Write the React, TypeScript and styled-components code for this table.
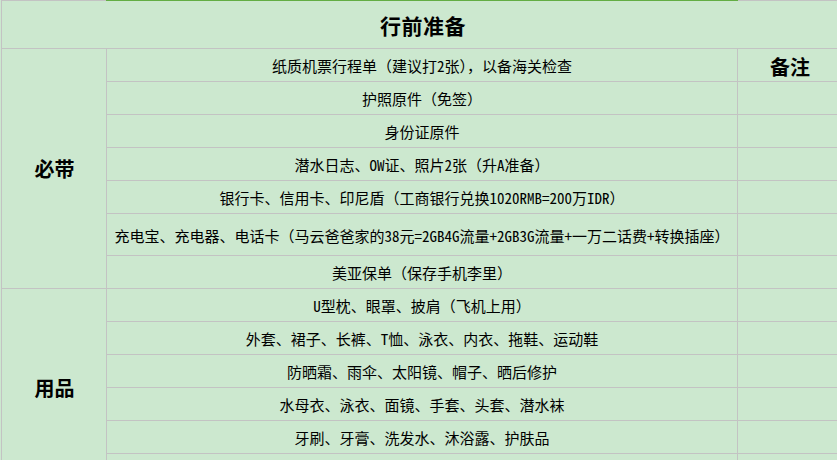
import React from 'react';
import styled, { createGlobalStyle } from 'styled-components';

const GlobalStyle = createGlobalStyle`
    html, body {
        margin: 0;
        padding: 0;
        background: #cce8cf;
        overflow: hidden;
    }
`;

const Page = styled.div`
    width: 842px;
    padding-left: 1px;
    background: #cce8cf;
    font-family: "Noto Sans Mono CJK SC", "Noto Sans CJK SC", sans-serif;
    color: #000;
`;

const Sheet = styled.div`
    position: relative;
    display: grid;
    grid-template-columns: 104px 630px 104px;
    gap: 1px;
    padding: 1px 0 0 1px;
    background: #c3c3c3;
`;

const Highlight = styled.div`
    position: absolute;
    top: 0;
    left: 105px;
    width: 632px;
    height: 1px;
    background: #63ad44;
`;

const Cell = styled.div`
    display: flex;
    align-items: center;
    justify-content: center;
    background: #cce8cf;
    white-space: nowrap;
`;

const Title = styled(Cell)`
    grid-column: 1 / -1;
    height: 47px;
    padding-left: 2px;
    font-size: 21px;
    font-weight: 700;
    letter-spacing: 0.5px;
`;

const Category = styled(Cell)<{ $rows: number }>`
    grid-column: 1;
    grid-row: span ${p => p.$rows};
    font-size: 20px;
    font-weight: 700;
    padding-left: 1px;
`;

const Item = styled(Cell)<{ $tall?: boolean }>`
    grid-column: 2;
    height: ${p => (p.$tall ? '41px' : '32px')};
    font-size: 15px;
    padding-top: 1px;
    box-sizing: border-box;
`;

const Note = styled(Cell)`
    grid-column: 3;
    font-size: 20px;
    font-weight: 700;
    padding-top: 3px;
`;

interface ISection {
    name: string;
    items: string[];
    tall?: number;
}

const sections: ISection[] = [
    {
        name: '必带',
        items: [
            '纸质机票行程单（建议打2张），以备海关检查',
            '护照原件（免签）',
            '身份证原件',
            '潜水日志、OW证、照片2张（升A准备）',
            '银行卡、信用卡、印尼盾（工商银行兑换1020RMB=200万IDR）',
            '充电宝、充电器、电话卡（马云爸爸家的38元=2GB4G流量+2GB3G流量+一万二话费+转换插座）',
            '美亚保单（保存手机李里）',
        ],
        tall: 5,
    },
    {
        name: '用品',
        items: [
            'U型枕、眼罩、披肩（飞机上用）',
            '外套、裙子、长裤、T恤、泳衣、内衣、拖鞋、运动鞋',
            '防晒霜、雨伞、太阳镜、帽子、晒后修护',
            '水母衣、泳衣、面镜、手套、头套、潜水袜',
            '牙刷、牙膏、洗发水、沐浴露、护肤品',
            '',
        ],
    },
];

export default function App() {
    return (
        <Page>
            <GlobalStyle />
            <Sheet>
                <Highlight />
                <Title>行前准备</Title>
                {sections.map((section, s) => (
                    <React.Fragment key={section.name}>
                        <Category $rows={section.items.length}>{section.name}</Category>
                        {section.items.map((item, i) => (
                            <React.Fragment key={i}>
                                <Item $tall={section.tall === i}>{item}</Item>
                                <Note>{s === 0 && i === 0 ? '备注' : ''}</Note>
                            </React.Fragment>
                        ))}
                    </React.Fragment>
                ))}
            </Sheet>
        </Page>
    );
}
